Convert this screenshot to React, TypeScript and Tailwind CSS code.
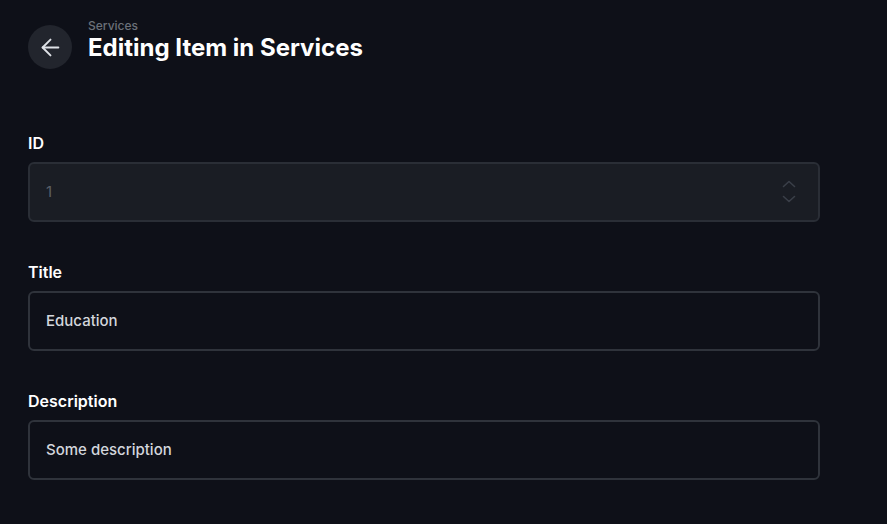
import { ArrowLeft } from "lucide-react";

type FieldProps = {
  label: string;
  value: string;
  disabled?: boolean;
  number?: boolean;
};

function Field(props: FieldProps) {
  return (
    <div className="flex flex-col">
      <label className="mb-[9px] h-5 text-[16px] font-semibold leading-5 text-white">
        {props.label}
      </label>
      <div
        className={
          props.disabled
            ? "flex h-[60px] items-center justify-between rounded-md border-2 border-[#2a2e36] bg-[#1a1d24] pl-4 pr-[22px]"
            : "flex h-[60px] items-center justify-between rounded-md border-2 border-[#2f333b] bg-[#0e1018] pl-4 pr-[22px]"
        }
      >
        <span
          className={
            props.disabled
              ? "text-[15px] text-[#5b6069]"
              : "text-[15px] font-medium text-[#d3d6dc]"
          }
        >
          {props.value}
        </span>
        {props.number && (
          <svg
            width="14"
            height="24"
            viewBox="0 0 14 24"
            fill="none"
            stroke="#3a3f48"
            strokeWidth="1.6"
            strokeLinecap="round"
            strokeLinejoin="round"
          >
            <path d="M1.5 6.5 L7 1.5 L12.5 6.5" />
            <path d="M1.5 16.5 L7 21.5 L12.5 16.5" />
          </svg>
        )}
      </div>
    </div>
  );
}

export default function App() {
  return (
    <div
      className="min-h-[524px] w-full bg-[#0e1018] px-7 pt-[25px]"
      style={{ fontFamily: "Inter, 'Noto Sans', sans-serif" }}
    >
      <div className="flex items-start gap-4">
        <button className="flex h-11 w-11 shrink-0 items-center justify-center rounded-full bg-[#22252d] text-[#dfe2e7]">
          <ArrowLeft size={27} strokeWidth={1.7} />
        </button>
        <div className="-mt-[7px] flex flex-col">
          <span className="text-[12px] font-medium leading-[15px] text-[#6b7079]">
            Services
          </span>
          <h1 className="text-[24px] font-bold leading-[30px] text-white">
            Editing Item in Services
          </h1>
        </div>
      </div>

      <div className="mt-[64px] flex w-[792px] flex-col gap-[40px]">
        <Field label="ID" value="1" disabled number />
        <Field label="Title" value="Education" />
        <Field label="Description" value="Some description" />
      </div>
    </div>
  );
}
